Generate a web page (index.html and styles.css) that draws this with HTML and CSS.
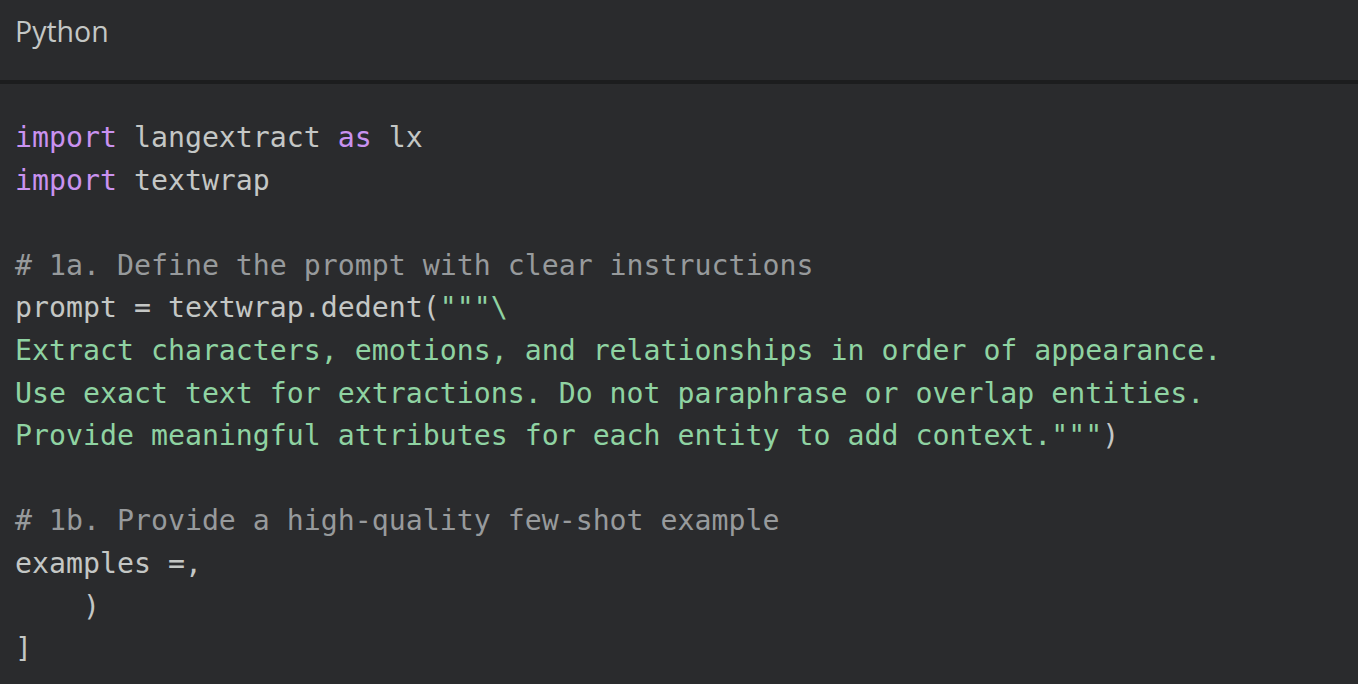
FILE: index.html
```html
<!DOCTYPE html>
<html>
<head>
<meta charset="utf-8">
<link rel="stylesheet" href="styles.css">
</head>
<body>
<div class="block">
  <div class="header"><span class="lang">Python</span></div>
  <pre class="code"><span class="kw">import</span> langextract <span class="kw">as</span> lx
<span class="kw">import</span> textwrap

<span class="cm"># 1a. Define the prompt with clear instructions</span>
prompt = textwrap.dedent(<span class="st">"""\
Extract characters, emotions, and relationships in order of appearance.
Use exact text for extractions. Do not paraphrase or overlap entities.
Provide meaningful attributes for each entity to add context."""</span>)

<span class="cm"># 1b. Provide a high-quality few-shot example</span>
examples =,
    )
]</pre>
</div>
</body>
</html>
```

FILE: styles.css
```css
html, body {
  margin: 0;
  padding: 0;
  background: #2a2b2d;
  height: 100%;
  overflow: hidden;
}
.block {
  background: #2a2b2d;
}
.header {
  height: 80px;
  border-bottom: 4px solid #1c1d1e;
  display: flex;
  align-items: flex-start;
  padding-left: 15px;
  box-sizing: content-box;
}
.lang {
  font-family: "Open Sans", "Noto Sans", sans-serif;
  font-size: 28.5px;
  line-height: 28px;
  margin-top: 17px;
  color: #c4c7c5;
}
.code {
  margin: 0;
  padding: 33px 15px 0 15px;
  font-family: "DejaVu Sans Mono", "Liberation Mono", monospace;
  font-size: 28.22px;
  line-height: 42.6px;
  color: #c4c7c5;
  white-space: pre;
}
.kw { color: #c992f0; }
.cm { color: #979a9c; }
.st { color: #8fd3a2; }
```
